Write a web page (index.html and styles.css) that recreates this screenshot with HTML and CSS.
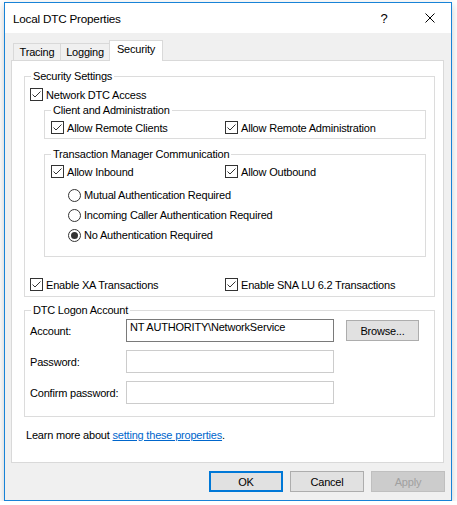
FILE: index.html
```html
<!DOCTYPE html>
<html lang="en">
<head>
<meta charset="utf-8">
<title>Local DTC Properties</title>
<link rel="stylesheet" href="styles.css">
</head>
<body>
<div class="window">
  <div class="titlebar">
    <span class="title">Local DTC Properties</span>
    <span class="caption-btn help">?</span>
    <span class="caption-btn close"><svg width="10" height="10" viewBox="0 0 10 10"><path d="M0.5 0.5 L9.5 9.5 M9.5 0.5 L0.5 9.5" stroke="#000" stroke-width="1" fill="none"/></svg></span>
  </div>
  <div class="dialog-body">
    <div class="tabs">
      <div class="tab tab-tracing">Tracing</div>
      <div class="tab tab-logging">Logging</div>
      <div class="tab tab-security">Security</div>
    </div>
    <div class="panel">
      <div class="group g-main">
        <div class="gtitle">Security Settings</div>
        <div class="row r-network">
          <span class="check"><svg class="cb" width="13" height="13" viewBox="0 0 13 13"><rect x="0.5" y="0.5" width="12" height="12" fill="#fff" stroke="#333"/><polyline points="2.5,6.5 5,9 10.5,3.5" fill="none" stroke="#333" stroke-width="1"/></svg>Network DTC Access</span>
        </div>
        <div class="group sub sub-client">
          <div class="gtitle">Client and Administration</div>
          <div class="row r-first">
            <span class="check col-sub"><svg class="cb" width="13" height="13" viewBox="0 0 13 13"><rect x="0.5" y="0.5" width="12" height="12" fill="#fff" stroke="#333"/><polyline points="2.5,6.5 5,9 10.5,3.5" fill="none" stroke="#333" stroke-width="1"/></svg>Allow Remote Clients</span>
            <span class="check"><svg class="cb" width="13" height="13" viewBox="0 0 13 13"><rect x="0.5" y="0.5" width="12" height="12" fill="#fff" stroke="#333"/><polyline points="2.5,6.5 5,9 10.5,3.5" fill="none" stroke="#333" stroke-width="1"/></svg>Allow Remote Administration</span>
          </div>
        </div>
        <div class="group sub sub-tm">
          <div class="gtitle">Transaction Manager Communication</div>
          <div class="row r-inbound">
            <span class="check col-sub"><svg class="cb" width="13" height="13" viewBox="0 0 13 13"><rect x="0.5" y="0.5" width="12" height="12" fill="#fff" stroke="#333"/><polyline points="2.5,6.5 5,9 10.5,3.5" fill="none" stroke="#333" stroke-width="1"/></svg>Allow Inbound</span>
            <span class="check"><svg class="cb" width="13" height="13" viewBox="0 0 13 13"><rect x="0.5" y="0.5" width="12" height="12" fill="#fff" stroke="#333"/><polyline points="2.5,6.5 5,9 10.5,3.5" fill="none" stroke="#333" stroke-width="1"/></svg>Allow Outbound</span>
          </div>
          <div class="radios">
            <div class="radio"><svg class="rb" width="13" height="13" viewBox="0 0 13 13"><circle cx="6.5" cy="6.5" r="6" fill="#fff" stroke="#333"/></svg>Mutual Authentication Required</div>
            <div class="radio"><svg class="rb" width="13" height="13" viewBox="0 0 13 13"><circle cx="6.5" cy="6.5" r="6" fill="#fff" stroke="#333"/></svg>Incoming Caller Authentication Required</div>
            <div class="radio"><svg class="rb" width="13" height="13" viewBox="0 0 13 13"><circle cx="6.5" cy="6.5" r="6" fill="#fff" stroke="#333"/><circle cx="6.5" cy="6.5" r="3.5" fill="#333"/></svg>No Authentication Required</div>
          </div>
        </div>
        <div class="row r-xa">
          <span class="check col-main"><svg class="cb" width="13" height="13" viewBox="0 0 13 13"><rect x="0.5" y="0.5" width="12" height="12" fill="#fff" stroke="#333"/><polyline points="2.5,6.5 5,9 10.5,3.5" fill="none" stroke="#333" stroke-width="1"/></svg>Enable XA Transactions</span>
          <span class="check"><svg class="cb" width="13" height="13" viewBox="0 0 13 13"><rect x="0.5" y="0.5" width="12" height="12" fill="#fff" stroke="#333"/><polyline points="2.5,6.5 5,9 10.5,3.5" fill="none" stroke="#333" stroke-width="1"/></svg>Enable SNA LU 6.2 Transactions</span>
        </div>
      </div>
      <div class="group g-logon">
        <div class="gtitle">DTC Logon Account</div>
        <div class="field f-first">
          <span class="field-label">Account:</span>
          <div class="input">NT AUTHORITY\NetworkService</div>
          <button class="btn browse" type="button">Browse...</button>
        </div>
        <div class="field">
          <span class="field-label">Password:</span>
          <div class="input disabled"></div>
        </div>
        <div class="field">
          <span class="field-label">Confirm password:</span>
          <div class="input disabled"></div>
        </div>
      </div>
      <p class="learn">Learn more about <a href="#" class="link">setting these properties</a>.</p>
    </div>
    <div class="buttons">
      <button class="btn btn-default" type="button">OK</button>
      <button class="btn" type="button">Cancel</button>
      <button class="btn btn-disabled" type="button">Apply</button>
    </div>
  </div>
</div>
</body>
</html>
```
FILE: styles.css
```css
* { box-sizing: border-box; }
html, body { margin: 0; padding: 0; }
body {
  background: #ffffff;
  font-family: "Liberation Sans", Arial, sans-serif;
  font-size: 11px;
  letter-spacing: -0.2px;
  color: #000;
}
.window {
  margin: 2px 0 0 4px;
  width: 448px;
  height: 499px;
  border: 1px solid #1883d7;
  display: flex;
  flex-direction: column;
  box-shadow: 0 3px 8px rgba(0, 0, 0, 0.22);
  background: #f0f0f0;
}
.titlebar {
  flex: none;
  height: 30px;
  background: #fff;
  display: flex;
  align-items: center;
}
.title {
  flex: 1;
  padding-left: 8px;
  font-size: 11.7px;
}
.caption-btn {
  width: 46px;
  height: 30px;
  display: flex;
  align-items: center;
  justify-content: center;
}
.help { font-size: 13px; padding-left: 4px; letter-spacing: 0; }
.close { padding-left: 3px; }
.dialog-body {
  flex: 1;
  background: #f0f0f0;
  padding: 7px 7px 0 6px;
  display: flex;
  flex-direction: column;
}
.tabs {
  flex: none;
  height: 20px;
  display: flex;
  align-items: flex-end;
  padding-left: 2px;
  position: relative;
  z-index: 1;
}
.tab {
  height: 17px;
  border: 1px solid #d9d9d9;
  border-bottom: none;
  background: #f0f0f0;
  text-align: center;
  line-height: 16px;
}
.tab + .tab { margin-left: -1px; }
.tab-tracing { width: 48px; }
.tab-logging { width: 50px; }
.tab-security {
  width: 54px;
  height: 21px;
  margin-bottom: -1px;
  background: #fff;
  line-height: 17px;
  padding-bottom: 3px;
  position: relative;
  z-index: 2;
}
.panel {
  flex: none;
  height: 403px;
  background: #fff;
  border: 1px solid #d9d9d9;
  padding: 15px 8px 0 12px;
}
.group { border: 1px solid #dcdcdc; }
.gtitle {
  width: fit-content;
  height: 13px;
  line-height: 13px;
  margin-top: -7px;
  padding: 0 2px;
  background: #fff;
  white-space: nowrap;
}
.g-main { padding: 0 0 5px 5px; }
.g-main > .gtitle { margin-left: 1px; }
.g-logon { margin-top: 13px; padding: 0 0 12px 5px; }
.g-logon > .gtitle { margin-left: 1px; }
.sub { margin: 0 8px 0 14px; padding: 0 0 4px 6px; }
.sub > .gtitle { margin-left: 0; }
.sub-client { margin-top: 9px; }
.sub-tm { margin-top: 15px; padding-bottom: 11px; }
.row {
  display: flex;
  align-items: center;
  height: 13px;
  white-space: nowrap;
}
.r-network { margin-top: 5px; }
.r-first { margin-top: 4px; }
.r-inbound { margin-top: 4px; }
.r-xa { margin-top: 21px; }
.check { display: flex; align-items: center; }
.cb, .rb { flex: none; margin-right: 3px; display: block; }
.col-main { width: 195px; }
.col-sub { width: 174px; }
.radios { margin-top: 7px; padding-left: 17px; }
.radio {
  height: 20px;
  display: flex;
  align-items: center;
  white-space: nowrap;
}
.field {
  display: flex;
  align-items: center;
  height: 23px;
  margin-top: 8px;
}
.f-first { margin-top: 2px; }
.field-label { width: 96px; flex: none; white-space: nowrap; }
.input {
  width: 208px;
  height: 23px;
  flex: none;
  border: 1px solid #7a7a7a;
  padding: 1px 3px 0;
  line-height: 13px;
  background: #fff;
  white-space: nowrap;
  overflow: hidden;
}
.input.disabled { border-color: #cccccc; }
.learn {
  margin: 12px 0 0 2px;
  line-height: 13px;
}
.link { color: #0066cc; text-decoration: underline; }
.buttons {
  flex: none;
  margin: 8px -1px 0 0;
  display: flex;
  justify-content: flex-end;
  gap: 7px;
}
.btn {
  width: 74px;
  height: 21px;
  padding: 0;
  margin: 0;
  border: 1px solid #adadad;
  background: #e1e1e1;
  font: inherit;
  letter-spacing: inherit;
  color: #000;
  display: flex;
  align-items: center;
  justify-content: center;
  border-radius: 0;
}
.browse { width: 73px; margin-left: 12px; }
.btn-default { border: 2px solid #0078d7; }
.btn-disabled { background: #cccccc; border-color: #bfbfbf; color: #a0a0a0; }
```
